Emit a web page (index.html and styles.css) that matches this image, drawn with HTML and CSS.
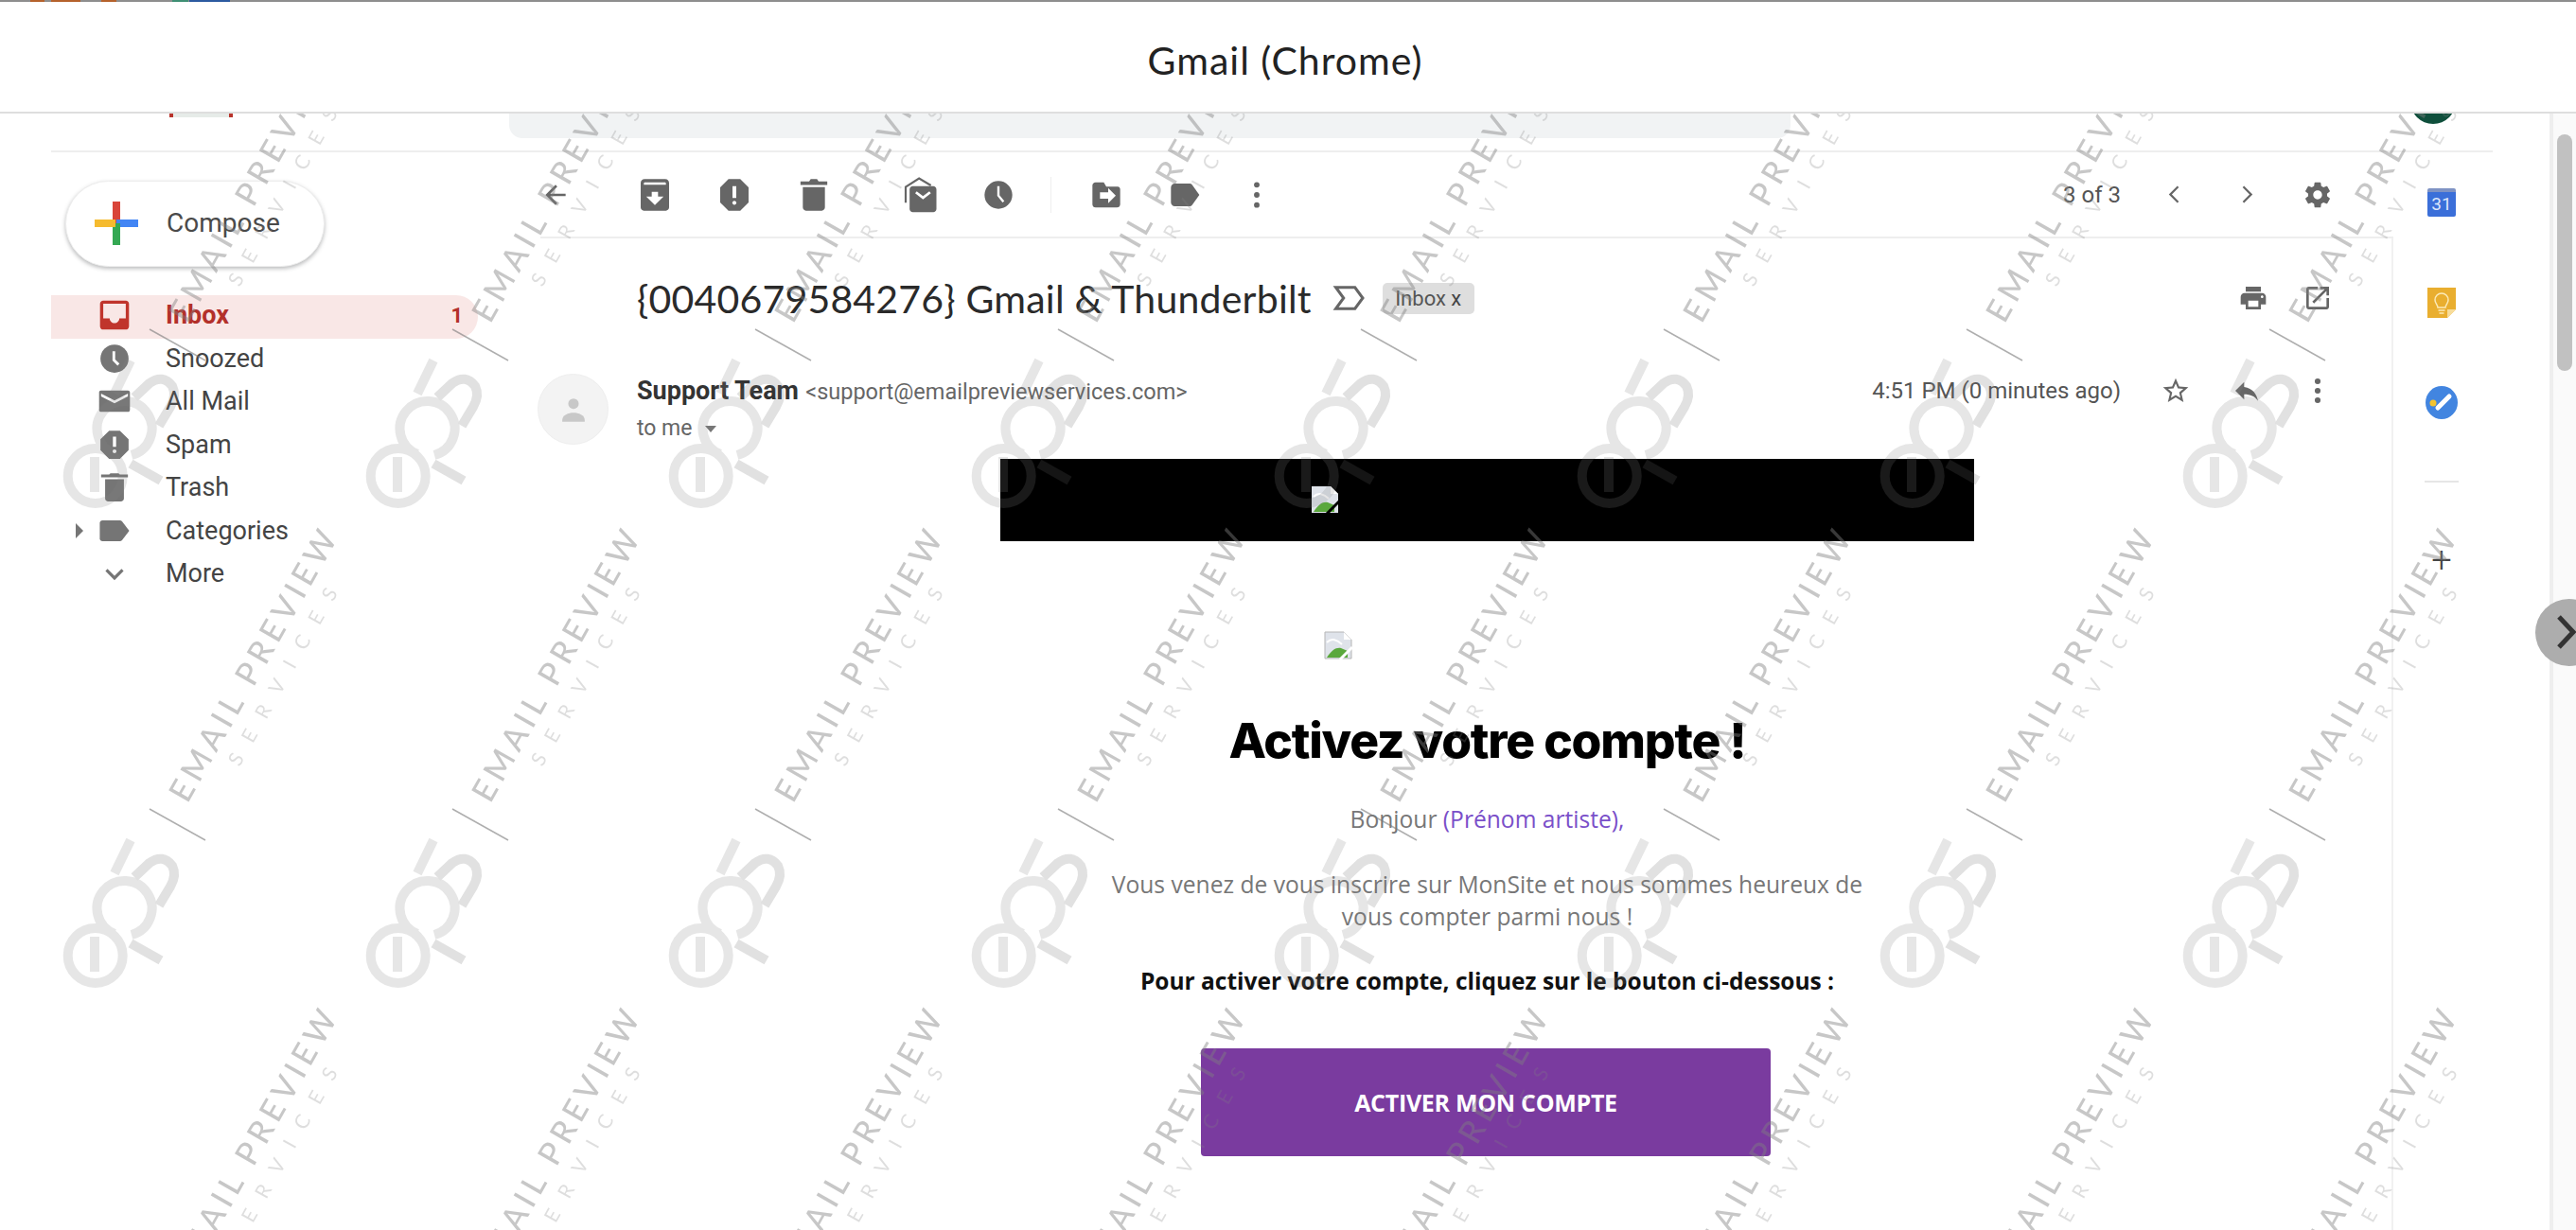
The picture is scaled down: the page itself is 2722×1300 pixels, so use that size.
FILE: index.html
```html
<!DOCTYPE html>
<html lang="en">
<head>
<meta charset="utf-8">
<title>Gmail (Chrome)</title>
<link rel="stylesheet" href="styles.css">
</head>
<body>
<div class="shot">
  <div class="strip">
    <i class="bit o1"></i><i class="bit o2"></i><i class="bit o3"></i><i class="bit g1"></i><i class="bit b1"></i>
  </div>
  <header class="head"><h1>Gmail (Chrome)</h1></header>
  <div class="app">
    <div class="gmail">
      <div class="band">
        <div class="logo-bit"></div>
        <div class="search"></div>
        <div class="account"></div>
      </div>
      <div class="columns">
        <nav class="nav">
          <button class="compose">
            <svg class="plus" viewBox="0 0 46 46"><rect x="19" width="8" height="23" fill="#d9453a"/><rect x="23" y="19" width="23" height="8" fill="#4285f4"/><rect x="19" y="23" width="8" height="23" fill="#34a853"/><rect y="19" width="22" height="8" fill="#f5bb2f"/></svg>
            <span>Compose</span>
          </button>
          <ul class="folders">
            <li class="row active"><span class="caret"></span><svg class="ico" viewBox="2 2 20 20"><path d="M19 3H5C3.900 3 3 3.900 3 5v14c0 1.100.9 2 2 2h14c1.100 0 2-.9 2-2V5c0-1.100-.9-2-2-2zm0 11h-4c0 1.660-1.350 3-3 3s-3-1.340-3-3H5V5h14v9z"/></svg><span class="lbl">Inbox</span><span class="count">1</span></li>
            <li class="row"><span class="caret"></span><svg class="ico" viewBox="0 0 24 24"><circle cx="12" cy="12" r="10.500"/><path d="M11.500 6.500V13l3.500 3.500" stroke="#fff" stroke-width="2" fill="none"/></svg><span class="lbl">Snoozed</span></li>
            <li class="row"><span class="caret"></span><svg class="ico" viewBox="0 0 24 24"><path d="M22 4H2c-1 0-1.500.6-1.500 1.500v13c0 .9.600 1.500 1.500 1.500h20c.9 0 1.500-.6 1.500-1.500v-13C23.500 4.600 22.900 4 22 4zm0 4.500l-10 5-10-5V6.400l10 5 10-5v2.100z"/></svg><span class="lbl">All Mail</span></li>
            <li class="row"><span class="caret"></span><svg class="ico" viewBox="0 0 24 24"><path d="M16 1.500H8L1.500 8v8L8 22.500h8l6.500-6.500V8L16 1.500zM12 18.300c-.8 0-1.400-.6-1.400-1.400s.6-1.400 1.400-1.400 1.400.6 1.400 1.400-.6 1.400-1.400 1.400zm1.200-4.800h-2.400V6h2.400v7.500z"/></svg><span class="lbl">Spam</span></li>
            <li class="row"><span class="caret"></span><svg class="ico" viewBox="0 0 24 24"><path d="M5 20.500c0 1.100.9 2 2 2h10c1.100 0 2-.9 2-2V6H5v14.500zM22 2.500h-6l-1-1H9l-1 1H2v2h20v-2z"/></svg><span class="lbl">Trash</span></li>
            <li class="row"><span class="caret on"></span><svg class="ico" viewBox="0 0 24 24"><path d="M17.600 5c-.4-.5-1-.8-1.600-.8L3 4.200c-1.100 0-2 .9-2 2v11.600c0 1.100.9 2 2 2L16 19.800c.6 0 1.200-.3 1.600-.8L23 12l-5.400-7z"/></svg><span class="lbl">Categories</span></li>
            <li class="row"><span class="caret"></span><svg class="ico" viewBox="0 0 24 24"><path d="M6 9.500l6 6 6-6" fill="none" stroke-width="2.200"/></svg><span class="lbl">More</span></li>
          </ul>
        </nav>
        <main class="main">
          <div class="toolbar">
            <svg class="tool" viewBox="0 0 24 24"><path d="M20 11H7.830l5.590-5.590L12 4l-8 8 8 8 1.410-1.410L7.830 13H20v-2z"/></svg>
            <div class="tb-group first">
              <svg class="tool big" viewBox="0 0 24 24"><path d="M21 4.500C21 3 20 2 18.500 2h-13C4 2 3 3 3 4.500V20c0 1.100.9 2 2 2h14c1.100 0 2-.9 2-2V4.500zM12 18.500L6.500 13H10v-3h4v3h3.500L12 18.500zM5 5.500V4.700C5 4.200 5.300 4 5.800 4h12.400c.5 0 .8.200.8.700v.8H5z"/></svg>
              <svg class="tool big" viewBox="0 0 24 24"><path d="M15.730 2H8.270L3 7.270v9.460L8.270 22h7.460L21 16.730V7.270L15.730 2zM12 18.300c-.72 0-1.300-.58-1.300-1.300 0-.72.58-1.300 1.300-1.300.72 0 1.300.58 1.300 1.300 0 .72-.58 1.300-1.300 1.300zm1.200-4.300h-2.400V6.500h2.400V14z"/></svg>
              <svg class="tool big" viewBox="0 0 24 24"><path d="M5 20c0 1.100.9 2 2 2h10c1.100 0 2-.9 2-2V7H5v13zM20.500 3.500h-5.500l-1-1.500h-4l-1 1.500H3.500v2.200h17V3.500z"/></svg>
            </div>
            <div class="tb-group second">
              <svg class="tool big" viewBox="0 0 24 24"><path d="M3 17V7l8.500-5.500L19 6" fill="none" stroke-width="1.300"/><path d="M7.500 6.500h13c1 0 2 1 2 2V21c0 1-1 2-2 2h-13c-1 0-2-1-2-2V8.500c0-1 1-2 2-2zm1.500 4.500l5 3.800 5-3.800-1-1.300-4 3-4-3-1 1.300z"/></svg>
              <svg class="tool" viewBox="0 0 24 24"><circle cx="12" cy="12" r="11"/><path d="M12 5v7.500l4 5" stroke="#fff" stroke-width="1.800" fill="none"/></svg>
            </div>
            <span class="divider"></span>
            <div class="tb-group third">
              <svg class="tool" viewBox="0 0 24 24"><path d="M21 5.500h-9L10 2H3.500C2.100 2 1 3 1 4.500V19.500C1 21 2.100 22 3.500 22H20.500c1.400 0 2.500-1 2.500-2.500V7.500c0-1.100-.9-2-2-2zm-7.500 13v-3.500H7v-5h6.500V6.500l6 6-6 6z"/></svg>
              <svg class="tool" viewBox="0 0 24 24"><path d="M17.600 3.800c-.4-.5-1-.8-1.600-.8H4C2.300 3 1 4.300 1 6v12c0 1.700 1.300 3 3 3h12c.6 0 1.200-.3 1.600-.8L23.500 12 17.600 3.800z"/></svg>
              <svg class="tool dots" viewBox="0 0 24 24"><circle cx="12" cy="4" r="2.200"/><circle cx="12" cy="12" r="2.200"/><circle cx="12" cy="20" r="2.200"/></svg>
            </div>
            <span class="pager">3 of 3</span>
            <div class="slots">
              <span class="slot"><svg class="tool thin" viewBox="0 0 24 24"><path d="M15.410 5.410L14 4l-8 8 8 8 1.410-1.410L8.830 12z"/></svg></span>
              <span class="slot"><svg class="tool thin" viewBox="0 0 24 24"><path d="M8.590 5.410L10 4l8 8-8 8-1.410-1.410L15.170 12z"/></svg></span>
              <span class="slot"><svg class="tool" viewBox="0 0 24 24"><path d="M19.430 12.980c.04-.32.07-.64.07-.98s-.03-.66-.07-.98l2.110-1.650c.19-.15.24-.42.12-.64l-2-3.460c-.12-.22-.39-.3-.61-.22l-2.490 1c-.52-.4-1.080-.73-1.690-.98l-.38-2.650C14.460 2.180 14.250 2 14 2h-4c-.25 0-.46.18-.49.42l-.38 2.650c-.61.25-1.170.59-1.690.98l-2.490-1c-.23-.09-.49 0-.61.22l-2 3.460c-.13.22-.07.49.12.64l2.110 1.650c-.04.32-.07.65-.07.98s.03.66.07.98l-2.110 1.650c-.19.15-.24.42-.12.64l2 3.460c.12.22.39.3.61.22l2.490-1c.52.4 1.080.73 1.690.98l.38 2.650c.03.24.24.42.49.42h4c.25 0 .46-.18.49-.42l.38-2.650c.61-.25 1.170-.59 1.690-.98l2.490 1c.23.09.49 0 .61-.22l2-3.460c.12-.22.07-.49-.12-.64l-2.110-1.650zM12 15.500c-1.930 0-3.500-1.570-3.500-3.500s1.570-3.500 3.500-3.500 3.500 1.570 3.500 3.500-1.570 3.500-3.500 3.500z"/></svg></span>
            </div>
          </div>
          <section class="msg">
            <div class="subject-row">
              <h2 class="subject">{0040679584276} Gmail &amp; Thunderbilt</h2>
              <svg class="marker" viewBox="0 0 24 24"><path d="M3 4.500h13.500L22 12l-5.500 7.500H3L8.500 12 3 4.500z" fill="none" stroke="#666" stroke-width="2"/></svg>
              <span class="chip">Inbox <b>x</b></span>
              <div class="slots narrow">
                <span class="slot"><svg class="tool" viewBox="0 0 24 24"><path d="M19 8H5c-1.660 0-3 1.340-3 3v6h4v4h12v-4h4v-6c0-1.660-1.340-3-3-3zm-3 11H8v-5h8v5zm3-7c-.55 0-1-.45-1-1s.45-1 1-1 1 .45 1 1-.45 1-1 1zm-1-9H6v4h12V3z"/></svg></span>
                <span class="slot"><svg class="tool" viewBox="0 0 24 24"><path d="M19 19H5V5h7V3H5c-1.110 0-2 .9-2 2v14c0 1.100.89 2 2 2h14c1.100 0 2-.9 2-2v-7h-2v7zM14 3v2h3.590l-9.830 9.830 1.410 1.410L19 6.410V10h2V3h-7z"/></svg></span>
              </div>
            </div>
            <div class="sender-row">
              <div class="avatar"><svg viewBox="0 0 24 24"><circle cx="12" cy="8" r="3.500"/><path d="M4.500 19c0-3.500 4-5 7.500-5s7.500 1.500 7.500 5v1h-15v-1z"/></svg></div>
              <div class="who">
                <div class="from"><strong>Support Team</strong> <span class="addr">&lt;support@emailpreviewservices.com&gt;</span></div>
                <div class="tome">to me <i class="down"></i></div>
              </div>
              <span class="time">4:51 PM (0 minutes ago)</span>
              <div class="slots top">
                <span class="slot"><svg class="tool" viewBox="0 0 24 24"><path d="M22 9.240l-7.190-.62L12 2 9.190 8.630 2 9.240l5.460 4.730L5.820 21 12 17.270 18.180 21l-1.630-7.030L22 9.240zM12 15.400l-3.760 2.270 1-4.280-3.320-2.880 4.380-.38L12 6.100l1.710 4.040 4.380.38-3.320 2.880 1 4.280L12 15.400z"/></svg></span>
                <span class="slot"><svg class="tool" viewBox="0 0 24 24"><path d="M10 9V5l-7 7 7 7v-4.100c5 0 8.500 1.600 11 5.100-1-5-4-10-11-11z"/></svg></span>
                <span class="slot"><svg class="tool" viewBox="0 0 24 24"><circle cx="12" cy="4.500" r="2.300"/><circle cx="12" cy="12" r="2.300"/><circle cx="12" cy="19.500" r="2.300"/></svg></span>
              </div>
            </div>
            <article class="email">
              <div class="banner">
                <svg class="broken" viewBox="0 0 30 30"><path d="M1 1h20l8 8v20H1z" fill="#dfe3ea"/><path d="M21 1v8h8" fill="#fff"/><path d="M3 28c5-8 10-11 15-10l7 3v7z" fill="#5aa83c"/><path d="M3 12c5-5 11-3 16 2" fill="none" stroke="#fff" stroke-width="2"/><path d="M17 30L30 17" stroke="#000" stroke-width="3"/></svg>
              </div>
              <svg class="broken solo" viewBox="0 0 30 30"><path d="M1 1h20l8 8v20H1z" fill="#dfe3ea" stroke="#b5b5b5"/><path d="M21 1v8h8" fill="#fff"/><path d="M3 28c5-8 10-11 15-10l7 3v7z" fill="#5aa83c"/><path d="M3 12c5-5 11-3 16 2" fill="none" stroke="#fff" stroke-width="2"/><path d="M17 30L30 17" stroke="#fff" stroke-width="3"/></svg>
              <h3 class="title">Activez votre compte !</h3>
              <p class="hello">Bonjour <span class="var">(Prénom artiste),</span></p>
              <p class="para">Vous venez de vous inscrire sur MonSite et nous sommes heureux de<br>vous compter parmi nous !</p>
              <p class="cta-text">Pour activer votre compte, cliquez sur le bouton ci-dessous :</p>
              <a class="cta">ACTIVER MON COMPTE</a>
            </article>
          </section>
        </main>
        <aside class="side">
          <div class="app-ico cal"><span>31</span></div>
          <div class="app-ico keep"><svg viewBox="0 0 30 32"><path d="M0 0h30v23l-9 9H0z" fill="#e9ae2f"/><path d="M21 32v-9h9z" fill="#f7dc9a"/><path d="M11 21c0-3-3-4-3-8a7 7 0 0114 0c0 4-3 5-3 8zM11.500 24h7M12.500 27h5" fill="none" stroke="#fbeab8" stroke-width="1.500"/></svg></div>
          <div class="app-ico tasks"><svg viewBox="0 0 34 35"><ellipse cx="17" cy="17.500" rx="17" ry="17.500" fill="#4285e0"/><circle cx="8" cy="18" r="3.500" fill="#f4c430"/><path d="M13 23L25 11" stroke="#fff" stroke-width="5" stroke-linecap="round"/></svg></div>
          <div class="side-rule"></div>
          <div class="side-plus">+</div>
        </aside>
      </div>
    </div>
    <div class="scroll"><div class="thumb"></div></div>
  </div>

  <svg class="watermark" aria-hidden="true">
    <defs>
      <pattern id="wm" x="0" y="420" width="320" height="507" patternUnits="userSpaceOnUse">
        <g transform="translate(-60 -540)">
          <text class="wm-a" transform="translate(198 850) rotate(-60.500)" textLength="323" lengthAdjust="spacing">EMAIL PREVIEW</text>
          <text class="wm-b" transform="translate(253 811) rotate(-60.500)" textLength="212" lengthAdjust="spacing">SERVICES</text>
          <path class="wm-line" d="M158 855L217 888"/>
          <g class="wm-logo">
            <circle cx="100.700" cy="1010" r="29"/>
            <path d="M100 990V1027"/>
            <path class="ring" d="M121 987A29 29 0 1 1 139 988"/>
            <path d="M138 888L121 923"/>
            <path class="dk" d="M142 927L158 912Q172 902 182 915Q187 925 180 937L168 957"/>
            <path class="dk" d="M138 997L170 1015"/>
          </g>
        </g>
      </pattern>
    </defs>
    <rect width="100%" height="100%" fill="url(#wm)"/>
  </svg>

  <div class="pager-btn"><svg viewBox="0 0 20 36"><path d="M2 2l15 16L2 34" fill="none" stroke="#333" stroke-width="5"/></svg></div>
</div>
</body>
</html>
```

FILE: styles.css
```css
* { box-sizing: border-box; }
html, body { margin: 0; padding: 0; background: #fff; }
.shot { position: relative; width: 2722px; height: 1300px; overflow: hidden; font-family: Roboto, "Liberation Sans", sans-serif; color: #444; }

.strip { display: flex; height: 2px; background: #8e8e8e; position: relative; }
.bit { position: absolute; top: 0; height: 2px; }
.o1 { left: 32px; width: 15px; background: #b5622c; }
.o2 { left: 54px; width: 31px; background: #b5622c; }
.o3 { left: 107px; width: 16px; background: #b5622c; }
.g1 { left: 182px; width: 17px; background: #3f8f74; }
.b1 { left: 200px; width: 43px; background: #2c5aa0; }

.head { height: 118px; border-bottom: 2px solid #dedede; display: flex; align-items: center; justify-content: center; background: #fff; padding-top: 7px; padding-right: 6px; }
.head h1 { margin: 0; font-family: Lato, sans-serif; font-weight: 400; font-size: 41px; color: #222; letter-spacing: 1px; }

.app { display: flex; height: 1180px; }
.gmail { width: 2694px; padding-left: 54px; }
.scroll { width: 28px; border-left: 4px solid #eeeeee; background: #fafafa; padding-top: 22px; padding-left: 4px; }
.thumb { width: 16px; height: 250px; border-radius: 8px; background: #c1c1c1; }

.band { display: flex; align-items: flex-start; width: 2580px; height: 41px; border-bottom: 2px solid #eeeeee; overflow: hidden; }
.logo-bit { width: 67px; height: 4px; margin-left: 125px; background: #e6ebe8; border-left: 4px solid #b8342c; border-right: 4px solid #b8342c; }
.search { width: 1354px; height: 26px; margin-left: 292px; background: #f1f3f4; border-radius: 0 0 14px 14px; }
.account { width: 48px; height: 48px; margin-left: 655px; margin-top: -37px; border-radius: 50%; background: #0f4f3c; }

.columns { display: flex; height: 1139px; }
.nav { width: 506px; flex: none; padding-top: 30px; }
.compose { display: flex; align-items: center; width: 274px; height: 91px; margin-left: 15px; padding: 0 0 2px 30px; border: 1px solid #eee; border-radius: 46px; background: #fff; box-shadow: 0 2px 4px rgba(60,64,67,.35); font: 400 28px Roboto, sans-serif; color: #4a4a4a; }
.plus { width: 46px; height: 46px; flex: none; }
.compose span { margin-left: 30px; }
.folders { list-style: none; margin: 30px 0 0; padding: 0; }
.row { display: flex; align-items: center; width: 451px; height: 45.500px; padding-left: 20px; padding-right: 16px; padding-bottom: 3px; font-size: 27px; color: #444; fill: #757575; stroke: #757575; stroke-width: 0; border-radius: 0 23px 23px 0; }
.row.active { background: #f9e7e6; color: #b3302a; font-weight: 700; fill: #c0342c; }
.caret { width: 20px; height: 16px; flex: none; }
.caret.on { width: 8px; height: 0; margin-left: 6px; margin-right: 6px; border-left: 8px solid #757575; border-top: 8px solid transparent; border-bottom: 8px solid transparent; }
.ico { width: 34px; height: 34px; margin-left: 10px; margin-right: 37px; flex: none; }
.row .lbl { flex: 1; }
.count { font-size: 22px; font-weight: 700; }

.main { width: 1969px; flex: none; display: flex; flex-direction: column; }
.toolbar { display: flex; align-items: center; height: 91px; margin-left: 11px; border-bottom: 2px solid #eeeeee; padding-right: 43px; }
.tool { width: 32px; height: 32px; fill: #666; stroke: #666; stroke-width: 0; flex: none; display: block; }
.tool.big { width: 40px; height: 40px; }
.tb-group { display: flex; align-items: center; }
.first { margin-left: 69px; gap: 44px; }
.second { margin-left: 72px; gap: 47px; }
.third { margin-left: 42px; gap: 51px; }
.tool.dots { margin-left: -7px; }
.divider { width: 1px; height: 38px; margin-left: 39px; background: #eee; }
.pager { margin-left: auto; margin-right: 20px; font-size: 24px; color: #555; }
.slots { display: flex; flex: none; }
.slot { width: 75px; display: flex; justify-content: center; align-items: center; }
.tool.thin { width: 27px; height: 27px; }
.narrow .slot { width: 68px; }
.top { align-self: flex-start; height: 36px; }

.msg { flex: 1; border-right: 2px solid #f1f1f1; padding-bottom: 20px; }
.subject-row { display: flex; align-items: center; height: 126px; padding-left: 113px; padding-right: 44px; }
.subject { margin: 0; font: 400 41px Lato, sans-serif; letter-spacing: .2px; color: #2a2a2a; white-space: nowrap; }
.marker { width: 36px; height: 36px; margin-left: 21px; flex: none; }
.chip { margin-left: 18px; width: 97px; height: 33px; line-height: 33px; text-align: center; background: #dedede; border-radius: 5px; font-size: 22px; color: #555; }
.chip b { font-weight: 400; color: #444; }
.narrow { margin-left: auto; }

.sender-row { display: flex; align-items: center; height: 75px; margin-top: 17px; padding-left: 8px; padding-right: 41px; }
.avatar { width: 75px; height: 75px; flex: none; border-radius: 50%; background: #f3f3f3; border: 1px solid #eee; display: flex; align-items: center; justify-content: center; }
.avatar svg { width: 38px; height: 38px; fill: #c8c8c8; }
.who { margin-left: 30px; flex: 1; line-height: 38px; }
.from { font-size: 21px; color: #666; white-space: nowrap; }
.from strong { font-size: 27px; letter-spacing: 0; color: #333; }
.addr { font-size: 23.500px; margin-left: 2px; }
.tome { font-size: 23px; color: #666; }
.down { display: inline-block; margin-left: 8px; margin-bottom: 3px; border-top: 7px solid #777; border-left: 6px solid transparent; border-right: 6px solid transparent; }
.time { align-self: flex-start; line-height: 36px; margin-right: 20px; font-size: 24px; color: #555; }

.email { width: 1029px; margin: 15px 0 0 497px; text-align: center; font-family: "Open Sans", sans-serif; }
.banner { height: 87px; background: #000; display: flex; padding: 28px 0 0 328px; }
.broken { width: 30px; height: 30px; display: block; }
.solo { margin: 95px 0 0 342px; }
.title { margin: 55px 0 0; font: 800 51.500px/60px Inter, sans-serif; color: #000; letter-spacing: -1.200px; }
.hello, .para, .cta-text { margin: 0; line-height: 34px; font-size: 24.600px; color: #777; }
.hello { margin-top: 37px; }
.var { color: #7a4fc9; }
.para { margin-top: 35px; }
.cta-text { margin-top: 34px; color: #111; font-weight: 700; font-size: 24.500px; }
.cta { display: flex; align-items: center; justify-content: center; width: 602px; height: 114px; margin: 54px 0 0 212px; background: #7a3b9f; border-radius: 4px; color: #fff; font-weight: 700; font-size: 25px; letter-spacing: -.3px; }

.side { flex: 1; padding-left: 36px; padding-top: 38px; }
.app-ico { width: 30px; }
.cal { height: 30px; background: #3b6fd9; border-top: 4px solid #7f93c4; color: #dce6fb; font-size: 19px; text-align: center; line-height: 26px; border-radius: 2px; }
.keep { margin-top: 75px; height: 32px; }
.keep svg, .tasks svg { display: block; width: 100%; height: 100%; }
.tasks { margin-top: 72px; height: 35px; width: 34px; margin-left: -2px; }
.side-rule { width: 36px; height: 2px; margin: 65px 0 0 -3px; background: #e6e6e6; }
.side-plus { width: 30px; margin-top: 60px; text-align: center; font-size: 38px; line-height: 44px; font-weight: 300; color: #444; }

.watermark { position: absolute; left: 60px; top: 120px; width: 2560px; height: 1180px; pointer-events: none; }
.wm-a { font: 500 34px Lato, "Open Sans", sans-serif; fill: rgba(128,128,128,.44); }
.wm-b { font: 400 21px Lato, "Open Sans", sans-serif; fill: rgba(128,128,128,.26); }
.wm-line { stroke: rgba(120,120,120,.6); stroke-width: 1.500; fill: none; }
.wm-logo { fill: none; stroke: #808080; stroke-width: 10; opacity: .2; }
.wm-logo .dk { stroke: #666; }

.pager-btn { position: absolute; left: 2679px; top: 633px; width: 71px; height: 71px; border-radius: 50%; background: #adadad; padding: 17px 0 0 23px; }
.pager-btn svg { width: 20px; height: 36px; display: block; }
```
